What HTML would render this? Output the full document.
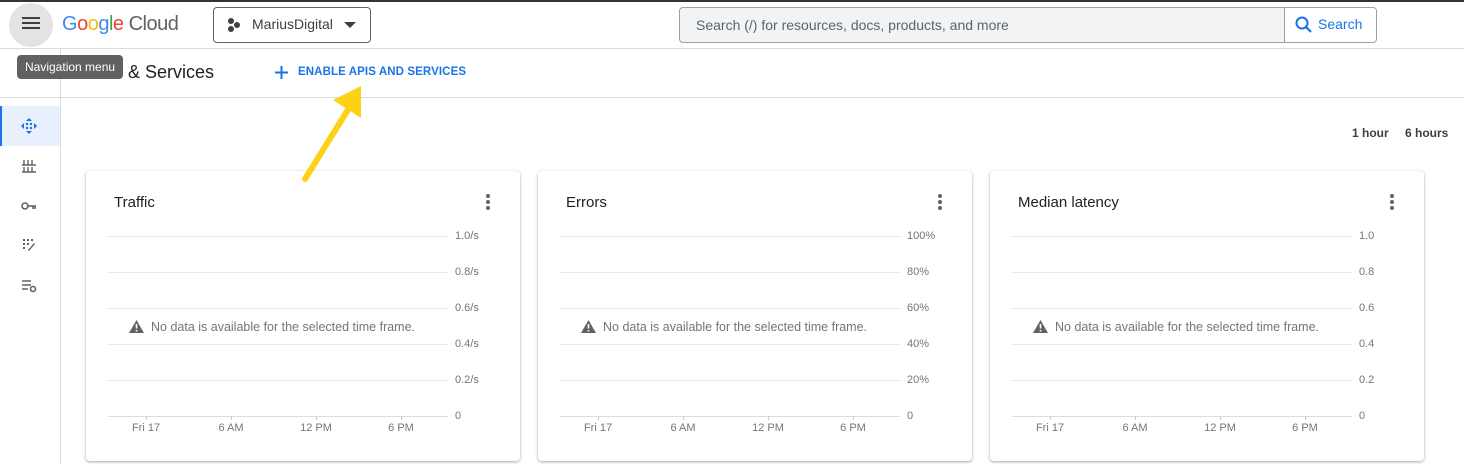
<!DOCTYPE html><html><head><style>
*{margin:0;padding:0;box-sizing:border-box}
body{width:1464px;height:464px;overflow:hidden;background:#fff;font-family:"Liberation Sans",Arial,sans-serif;position:relative;color:#202124}
.a{position:absolute}
.card{position:absolute;top:171px;width:434px;height:290px;background:#fff;border-radius:4px;box-shadow:0 1px 2px rgba(60,64,67,.3),0 1px 3px 1px rgba(60,64,67,.12)}
.card .t{position:absolute;left:28px;top:23px;font-size:15px;color:#202124}
.card .dots{position:absolute;left:400px;top:23px;width:4px}
.card .dots i{display:block;width:4px;height:4px;border-radius:2px;background:#5f6368;margin-bottom:2px}
.ln{position:absolute;left:22px;width:340px;height:1px;background:#e8e8e8}
.yl{position:absolute;left:369px;font-size:11px;color:#757575}
.xl{position:absolute;top:251px;font-size:11px;color:#757575;transform:translateX(-50%)}
.tk{position:absolute;top:245px;width:1px;height:4px;background:#ccc}
.nd{position:absolute;left:42px;top:148px;font-size:12.5px;color:#757575;display:flex;align-items:center;gap:6px}
</style></head><body>
<div class="a" style="left:0;top:0;width:1464px;height:2px;background:#333"></div>
<div class="a" style="left:0;top:48px;width:1464px;height:1px;background:#dadce0"></div>
<div class="a" style="left:60px;top:97px;width:1404px;height:1px;background:#dadce0"></div>
<div class="a" style="left:60px;top:48px;width:1px;height:416px;background:#dadce0"></div>
<div class="a" style="left:0;top:97px;width:60px;height:1px;background:#dadce0"></div>
<div class="a" style="left:9px;top:3px;width:44px;height:44px;border-radius:50%;background:#e3e3e3"></div>
<div class="a" style="left:22px;top:17px;width:18px;height:2px;background:#3c4043;box-shadow:0 5px 0 #3c4043,0 10px 0 #3c4043"></div>
<div class="a" style="left:62px;top:13px;font-size:20px;letter-spacing:-0.5px"><span style="color:#4285f4">G</span><span style="color:#ea4335">o</span><span style="color:#fbbc04">o</span><span style="color:#4285f4">g</span><span style="color:#34a853">l</span><span style="color:#ea4335">e</span> <span style="color:#5f6368">Cloud</span></div>
<div class="a" style="left:213px;top:7px;width:158px;height:36px;border:1px solid #5f6368;border-radius:4px"></div>
<div class="a" style="left:228px;top:18px;width:6px;height:6px;border-radius:3px;background:#3c4043"></div>
<div class="a" style="left:234px;top:22px;width:6px;height:6px;border-radius:3px;background:#3c4043"></div>
<div class="a" style="left:228px;top:26px;width:6px;height:6px;border-radius:3px;background:#3c4043"></div>
<div class="a" style="left:252px;top:16px;font-size:14px;color:#3c4043">MariusDigital</div>
<div class="a" style="left:344px;top:22px;width:0;height:0;border-left:6px solid transparent;border-right:6px solid transparent;border-top:6px solid #3c4043"></div>
<div class="a" style="left:679px;top:7px;width:698px;height:36px;border:1px solid #9aa0a6;border-radius:4px;background:#f1f3f4;overflow:hidden">
<div class="a" style="left:16px;top:9px;font-size:14px;color:#5f6368">Search (/) for resources, docs, products, and more</div>
<div class="a" style="left:604px;top:0;width:94px;height:36px;background:#fff;border-left:1px solid #9aa0a6"></div>
</div>
<svg class="a" style="left:1294px;top:15px" width="20" height="20" viewBox="0 0 20 20"><circle cx="8" cy="8" r="5.5" fill="none" stroke="#1a73e8" stroke-width="2"/><path d="M12 12l5 5" stroke="#1a73e8" stroke-width="2.2"/></svg>
<div class="a" style="left:1318px;top:16px;font-size:14px;color:#1a73e8">Search</div>
<div class="a" style="left:84px;top:62px;font-size:18px;color:#202124">APIs</div>
<div class="a" style="left:128px;top:62px;font-size:18px;color:#202124">&amp; Services</div>
<div class="a" style="left:17px;top:55px;width:106px;height:24px;background:#616161;border-radius:4px;color:#fff;font-size:12px;padding:5px 8px;white-space:nowrap">Navigation menu</div>
<svg class="a" style="left:274px;top:65px" width="15" height="15"><path d="M7.5 1v13M1 7.5h13" stroke="#1a73e8" stroke-width="2"/></svg>
<div class="a" style="left:298px;top:66px;font-size:11.5px;font-weight:bold;color:#1a73e8;letter-spacing:0.1px">ENABLE APIS AND SERVICES</div>
<svg class="a" style="left:0;top:0;z-index:5" width="1464" height="464"><path d="M305 179 L349 108" stroke="#fcd116" stroke-width="6" stroke-linecap="round"/><path d="M333 100 L361 86 L361 118 Z" fill="#fcd116"/></svg>
<div class="a" style="left:0;top:106px;width:60px;height:40px;background:#e8f0fe;border-left:2px solid #1a73e8"></div>
<svg class="a" style="left:20px;top:117px" width="18" height="18"><g fill="#1a73e8"><path d="M9 1l3 3H6z"/><path d="M9 17l3-3H6z"/><path d="M1 9l3-3v6z"/><path d="M17 9l-3-3v6z"/><circle cx="7" cy="7" r="1.2"/><circle cx="11" cy="7" r="1.2"/><circle cx="7" cy="11" r="1.2"/><circle cx="11" cy="11" r="1.2"/></g></svg>
<svg class="a" style="left:21px;top:158px" width="16" height="16"><g stroke="#5f6368" stroke-width="1.4"><path d="M1 7h14M1 14h14M3 2v5M7 2v5M11 2v5M3 9v5M7 9v5M11 9v5"/></g></svg>
<svg class="a" style="left:21px;top:198px" width="16" height="16"><circle cx="4" cy="8" r="3" fill="none" stroke="#5f6368" stroke-width="1.6"/><path d="M7 8h8M12 8v3M14 8v3" stroke="#5f6368" stroke-width="1.6"/></svg>
<svg class="a" style="left:22px;top:238px" width="14" height="14"><g fill="#5f6368"><rect x="1" y="1" width="2" height="2"/><rect x="5" y="1" width="2" height="2"/><rect x="9" y="1" width="2" height="2"/><rect x="1" y="5" width="2" height="2"/><rect x="5" y="5" width="2" height="2"/><rect x="1" y="9" width="2" height="2"/><path d="M6 12l6-7 1 1-6 7z"/></g></svg>
<svg class="a" style="left:21px;top:278px" width="18" height="16"><g stroke="#5f6368" stroke-width="1.4"><path d="M1 3h9M1 7h9M1 11h6"/></g><circle cx="12" cy="11" r="2.5" fill="none" stroke="#5f6368" stroke-width="1.6"/></svg>
<div class="a" style="left:1352px;top:126px;font-size:12px;font-weight:bold;color:#3c4043">1 hour</div>
<div class="a" style="left:1405px;top:126px;font-size:12px;font-weight:bold;color:#3c4043">6 hours</div>

<div class="card" style="left:86px">
<div class="t">Traffic</div><div class="dots"><i></i><i></i><i></i></div>
<div class="ln" style="top:65px"></div><div class="ln" style="top:101px"></div><div class="ln" style="top:137px"></div><div class="ln" style="top:173px"></div><div class="ln" style="top:209px"></div><div class="ln" style="top:245px;background:#ddd"></div>
<div class="yl" style="top:59px">1.0/s</div><div class="yl" style="top:95px">0.8/s</div><div class="yl" style="top:131px">0.6/s</div><div class="yl" style="top:167px">0.4/s</div><div class="yl" style="top:203px">0.2/s</div><div class="yl" style="top:239px">0</div>
<div class="tk" style="left:60px"></div><div class="tk" style="left:145px"></div><div class="tk" style="left:230px"></div><div class="tk" style="left:315px"></div>
<div class="xl" style="left:60px">Fri 17</div><div class="xl" style="left:145px">6 AM</div><div class="xl" style="left:230px">12 PM</div><div class="xl" style="left:315px">6 PM</div>
<div class="nd"><svg width="17" height="15"><path d="M8.5 1L16 14H1z" fill="#5f6368"/><path d="M8.5 5v4.5M8.5 11v1.5" stroke="#fff" stroke-width="1.6"/></svg>No data is available for the selected time frame.</div>
</div>
<div class="card" style="left:538px">
<div class="t">Errors</div><div class="dots"><i></i><i></i><i></i></div>
<div class="ln" style="top:65px"></div><div class="ln" style="top:101px"></div><div class="ln" style="top:137px"></div><div class="ln" style="top:173px"></div><div class="ln" style="top:209px"></div><div class="ln" style="top:245px;background:#ddd"></div>
<div class="yl" style="top:59px">100%</div><div class="yl" style="top:95px">80%</div><div class="yl" style="top:131px">60%</div><div class="yl" style="top:167px">40%</div><div class="yl" style="top:203px">20%</div><div class="yl" style="top:239px">0</div>
<div class="tk" style="left:60px"></div><div class="tk" style="left:145px"></div><div class="tk" style="left:230px"></div><div class="tk" style="left:315px"></div>
<div class="xl" style="left:60px">Fri 17</div><div class="xl" style="left:145px">6 AM</div><div class="xl" style="left:230px">12 PM</div><div class="xl" style="left:315px">6 PM</div>
<div class="nd"><svg width="17" height="15"><path d="M8.5 1L16 14H1z" fill="#5f6368"/><path d="M8.5 5v4.5M8.5 11v1.5" stroke="#fff" stroke-width="1.6"/></svg>No data is available for the selected time frame.</div>
</div>
<div class="card" style="left:990px">
<div class="t">Median latency</div><div class="dots"><i></i><i></i><i></i></div>
<div class="ln" style="top:65px"></div><div class="ln" style="top:101px"></div><div class="ln" style="top:137px"></div><div class="ln" style="top:173px"></div><div class="ln" style="top:209px"></div><div class="ln" style="top:245px;background:#ddd"></div>
<div class="yl" style="top:59px">1.0</div><div class="yl" style="top:95px">0.8</div><div class="yl" style="top:131px">0.6</div><div class="yl" style="top:167px">0.4</div><div class="yl" style="top:203px">0.2</div><div class="yl" style="top:239px">0</div>
<div class="tk" style="left:60px"></div><div class="tk" style="left:145px"></div><div class="tk" style="left:230px"></div><div class="tk" style="left:315px"></div>
<div class="xl" style="left:60px">Fri 17</div><div class="xl" style="left:145px">6 AM</div><div class="xl" style="left:230px">12 PM</div><div class="xl" style="left:315px">6 PM</div>
<div class="nd"><svg width="17" height="15"><path d="M8.5 1L16 14H1z" fill="#5f6368"/><path d="M8.5 5v4.5M8.5 11v1.5" stroke="#fff" stroke-width="1.6"/></svg>No data is available for the selected time frame.</div>
</div>
</body></html>
